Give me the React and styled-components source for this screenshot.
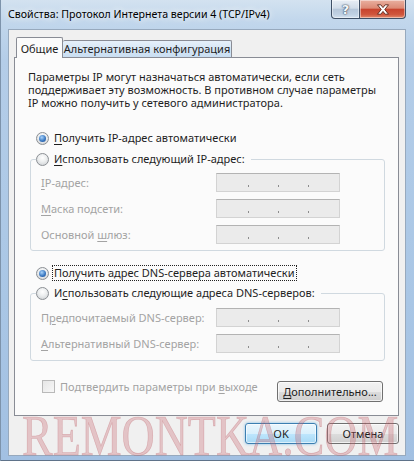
import React from 'react';
import styled, { createGlobalStyle } from 'styled-components';

const Global = createGlobalStyle`
  html, body { margin: 0; padding: 0; }
  body {
    width: 414px;
    height: 461px;
    overflow: hidden;
    font-family: "Noto Sans", "Open Sans", sans-serif;
    font-size: 11px;
    color: #1e1e1e;
  }
`;

const Window = styled.div`
  position: relative;
  width: 414px;
  height: 461px;
  display: flex;
  flex-direction: column;
  background: linear-gradient(180deg, #d3e2f0 0px, #c2d7ec 20px, #b4cde8 60px, #a9c6e5 300px, #a2c0e2 461px);
  box-shadow: inset 1px 0 0 #7d93ab, inset 0 -1px 0 #5f738a;
  overflow: hidden;
`;

const TitleBar = styled.div`
  height: 29px;
  flex: none;
  display: flex;
  align-items: flex-start;
`;

const TitleText = styled.div`
  padding-left: 8px;
  line-height: 28px;
  font-size: 10.6px;
  color: #000;
  white-space: nowrap;
  text-shadow: 0 0 6px rgba(255, 255, 255, 0.95), 0 0 10px rgba(255, 255, 255, 0.8);
`;

const CaptionButtons = styled.div`
  margin-left: auto;
  margin-right: 8px;
  display: flex;
`;

const CaptionButton = styled.div`
  height: 19px;
  width: ${p => (p.$close ? 46 : 29)}px;
  box-sizing: border-box;
  display: flex;
  align-items: center;
  justify-content: center;
  border: 1px solid #3f5066;
  border-top: none;
  ${p => (p.$close ? 'border-left: none;' : '')}
  border-radius: ${p => (p.$close ? '0 0 4px 0' : '0 0 0 4px')};
  background: ${p =>
    p.$close
      ? 'linear-gradient(180deg, #e9b0a0 0%, #dc8a75 45%, #c8442e 52%, #cf553c 80%, #e2896b 100%)'
      : 'linear-gradient(180deg, #e8eef5 0%, #d2dde9 45%, #b6c7da 52%, #c0d1e3 80%, #d3e1ef 100%)'};
  box-shadow: inset 0 0 0 1px rgba(255, 255, 255, 0.45);
`;

const HelpGlyph = styled.span`
  font-family: "DejaVu Sans", sans-serif;
  font-weight: bold;
  font-size: 13px;
  line-height: 1;
  color: #f4f7fb;
  text-shadow: 0 0 1px #2c3b50, 0 0 2px #2c3b50;
`;

const Client = styled.div`
  flex: 1;
  margin: 0 8px 5px 8px;
  border: 1px solid #97a9bd;
  background: #f0f0f0;
  padding: 7px 6px 0 5px;
  display: flex;
  flex-direction: column;
`;

const TabRow = styled.div`
  display: flex;
  align-items: flex-end;
  height: 21px;
  padding-left: 2px;
  margin-bottom: -1px;
  position: relative;
  z-index: 1;
`;

const Tab = styled.div`
  box-sizing: border-box;
  height: ${p => (p.$active ? 21 : 17)}px;
  margin-bottom: ${p => (p.$active ? 0 : 1)}px;
  width: ${p => p.$w}px;
  padding-top: ${p => (p.$active ? 2 : 0)}px;
  border: 1px solid #898c95;
  border-bottom: none;
  ${p => (p.$active ? '' : 'border-left: none;')}
  background: ${p => (p.$active ? '#fbfbfb' : 'linear-gradient(180deg, #e6f0fa 0%, #d6e6f5 50%, #c9def2 100%)')};
  display: flex;
  align-items: center;
  justify-content: center;
  line-height: 14px;
  white-space: nowrap;
  border-radius: 2px 2px 0 0;
`;

const Panel = styled.div`
  height: 359px;
  box-sizing: border-box;
  background: #fbfbfb;
  border: 1px solid #898c95;
  padding: 12px 13px 0 13px;
  display: flex;
  flex-direction: column;
`;

const Intro = styled.p`
  margin: 0;
  line-height: 13px;
  white-space: nowrap;
`;

const RadioRow = styled.div`
  display: flex;
  align-items: center;
  gap: 3px;
  height: 16px;
  margin-left: 8px;
  margin-top: ${p => p.$mt || 0}px;
`;

const RadioCircle = styled.span`
  width: 13px;
  height: 13px;
  box-sizing: border-box;
  border-radius: 50%;
  flex: none;
  border: 1px solid #8b8f94;
  background: radial-gradient(circle at 50% 35%, #ffffff 0%, #eceeef 45%, #c9cccf 100%);
  display: flex;
  align-items: center;
  justify-content: center;
  &::after {
    content: '';
    display: ${p => (p.$checked ? 'block' : 'none')};
    width: 7px;
    height: 7px;
    border-radius: 50%;
    background: radial-gradient(circle at 40% 35%, #a9d3fb 0%, #3d7bc3 55%, #15428b 100%);
  }
`;

const OptionLabel = styled.span`
  display: inline-block;
  line-height: 14px;
  padding: 0 1px;
  border: 1px dotted ${p => (p.$focus ? '#222' : 'transparent')};
  white-space: nowrap;
  color: ${p => (p.$disabled ? '#a3a3a3' : '#1e1e1e')};
`;

const Group = styled.fieldset`
  margin: ${p => p.$mt}px 0 0 2px;
  padding: 0;
  border: 1px solid #d0d9e0;
  border-radius: 3px;
  min-inline-size: 0;
`;

const Legend = styled.legend`
  margin-left: 5px;
  padding: 0 4px 0 0;
  height: 16px;
  display: flex;
  align-items: center;
  gap: 3px;
`;

const Rows = styled.div`
  display: flex;
  flex-direction: column;
  gap: 7px;
  padding: ${p => p.$pad}px 0 ${p => p.$pad}px 10px;
`;

const FieldRow = styled.div`
  display: grid;
  grid-template-columns: 175px 124px;
  align-items: center;
  height: 19px;
`;

const FieldLabel = styled.span`
  color: #a3a3a3;
  white-space: nowrap;
`;

const IpBox = styled.div`
  height: 19px;
  box-sizing: border-box;
  background: #ebebeb;
  border: 1px solid #d3d3d3;
  border-top-color: #b3b3b3;
  display: grid;
  grid-template-columns: 31px 1px 29px 1px 29px 1px 1fr;
  align-items: end;
  padding-bottom: 4px;
`;

const Dot = styled.span`
  width: 1px;
  height: 2px;
  background: #8c8c8c;
`;

const BottomRow = styled.div`
  display: flex;
  align-items: flex-start;
  margin-top: 19px;
`;

const CheckRow = styled.div`
  display: flex;
  align-items: center;
  gap: 3px;
  height: 13px;
  margin-left: 14px;
`;

const CheckBox = styled.span`
  width: 13px;
  height: 13px;
  box-sizing: border-box;
  border: 1px solid #b9b9b9;
  background: linear-gradient(135deg, #e6e6e6 0%, #f7f7f7 100%);
  flex: none;
`;

const Button = styled.div`
  box-sizing: border-box;
  width: ${p => p.$w}px;
  height: 21px;
  margin-top: ${p => p.$mt || 0}px;
  margin-right: ${p => p.$mr || 0}px;
  margin-left: ${p => (p.$auto ? 'auto' : '0')};
  border: 1px solid ${p => (p.$default ? '#3c7fb1' : '#707070')};
  border-radius: 3px;
  display: flex;
  align-items: center;
  justify-content: center;
  line-height: 14px;
  white-space: nowrap;
  color: #1e1e1e;
  background: ${p =>
    p.$default
      ? 'linear-gradient(180deg, #eaf6fd 0%, #d9f0fc 50%, #bee6fd 51%, #a7d9f5 100%)'
      : 'linear-gradient(180deg, #f2f2f2 0%, #ebebeb 50%, #dddddd 51%, #cfcfcf 100%)'};
  box-shadow: inset 0 0 0 1px ${p => (p.$default ? 'rgba(255,255,255,0.6)' : 'rgba(255,255,255,0.7)')}
    ${p => (p.$default ? ', 0 0 3px rgba(80, 170, 230, 0.7)' : '')};
`;

const ButtonRow = styled.div`
  display: flex;
  justify-content: flex-end;
  gap: 10px;
  margin-top: 7px;
`;

const Watermark = styled.div`
  position: absolute;
  left: 22px;
  top: 408px;
  font-family: "Liberation Serif", "Times New Roman", serif;
  font-size: 56px;
  line-height: 56px;
  white-space: nowrap;
  color: rgba(200, 100, 110, 0.32);
  transform: scaleX(0.82);
  transform-origin: left top;
  pointer-events: none;
  -webkit-text-stroke: 0.7px rgba(180, 70, 80, 0.3);
`;

const U = styled.u`
  text-decoration: underline;
  text-underline-offset: 2px;
`;

function Ip() {
  return (
    <IpBox>
      <span />
      <Dot />
      <span />
      <Dot />
      <span />
      <Dot />
      <span />
    </IpBox>
  );
}

export default function App() {
  return (
    <>
      <Global />
      <Window>
        <TitleBar>
          <TitleText>Свойства: Протокол Интернета версии 4 (TCP/IPv4)</TitleText>
          <CaptionButtons>
            <CaptionButton>
              <HelpGlyph>?</HelpGlyph>
            </CaptionButton>
            <CaptionButton $close>
              <svg width="14" height="11" viewBox="0 0 14 11">
                <path
                  d="M1.5 0.8 H4.8 L7 3.6 L9.2 0.8 H12.5 L8.8 5.5 L12.5 10.2 H9.2 L7 7.4 L4.8 10.2 H1.5 L5.2 5.5 Z"
                  fill="#ffffff"
                  stroke="#5a2418"
                  strokeWidth="0.9"
                  strokeLinejoin="round"
                />
              </svg>
            </CaptionButton>
          </CaptionButtons>
        </TitleBar>
        <Client>
          <TabRow>
            <Tab $active $w={47}>Общие</Tab>
            <Tab $w={169}>Альтернативная конфигурация</Tab>
          </TabRow>
          <Panel>
            <Intro>
              Параметры IP могут назначаться автоматически, если сеть
              <br />
              поддерживает эту возможность. В противном случае параметры
              <br />
              IP можно получить у сетевого администратора.
            </Intro>

            <RadioRow $mt={21}>
              <RadioCircle $checked />
              <OptionLabel>
                <U>П</U>олучить IP-адрес автоматически
              </OptionLabel>
            </RadioRow>

            <Group $mt={5}>
              <Legend>
                <RadioCircle />
                <OptionLabel>
                  <U>И</U>спользовать следующий IP-адрес:
                </OptionLabel>
              </Legend>
              <Rows $pad={6}>
                <FieldRow>
                  <FieldLabel>
                    <U>I</U>P-адрес:
                  </FieldLabel>
                  <Ip />
                </FieldRow>
                <FieldRow>
                  <FieldLabel>
                    <U>М</U>аска подсети:
                  </FieldLabel>
                  <Ip />
                </FieldRow>
                <FieldRow>
                  <FieldLabel>
                    Основной <U>ш</U>люз:
                  </FieldLabel>
                  <Ip />
                </FieldRow>
              </Rows>
            </Group>

            <RadioRow $mt={14}>
              <RadioCircle $checked />
              <OptionLabel $focus>Получить адрес DNS-сервера автоматически</OptionLabel>
            </RadioRow>

            <Group $mt={4}>
              <Legend>
                <RadioCircle />
                <OptionLabel>
                  И<U>с</U>пользовать следующие адреса DNS-серверов:
                </OptionLabel>
              </Legend>
              <Rows $pad={7}>
                <FieldRow>
                  <FieldLabel>
                    П<U>р</U>едпочитаемый DNS-сервер:
                  </FieldLabel>
                  <Ip />
                </FieldRow>
                <FieldRow>
                  <FieldLabel>
                    <U>А</U>льтернативный DNS-сервер:
                  </FieldLabel>
                  <Ip />
                </FieldRow>
              </Rows>
            </Group>

            <BottomRow>
              <CheckRow>
                <CheckBox />
                <OptionLabel $disabled>
                  Подтвердить параметры при <U>в</U>ыходе
                </OptionLabel>
              </CheckRow>
              <Button $w={106} $mt={1} $mr={2} $auto>
                <span>
                  <U>Д</U>ополнительно...
                </span>
              </Button>
            </BottomRow>
          </Panel>
          <ButtonRow>
            <Button $w={72} $default>OK</Button>
            <Button $w={72}>Отмена</Button>
          </ButtonRow>
        </Client>
        <Watermark>REMONTKA.COM</Watermark>
      </Window>
    </>
  );
}
